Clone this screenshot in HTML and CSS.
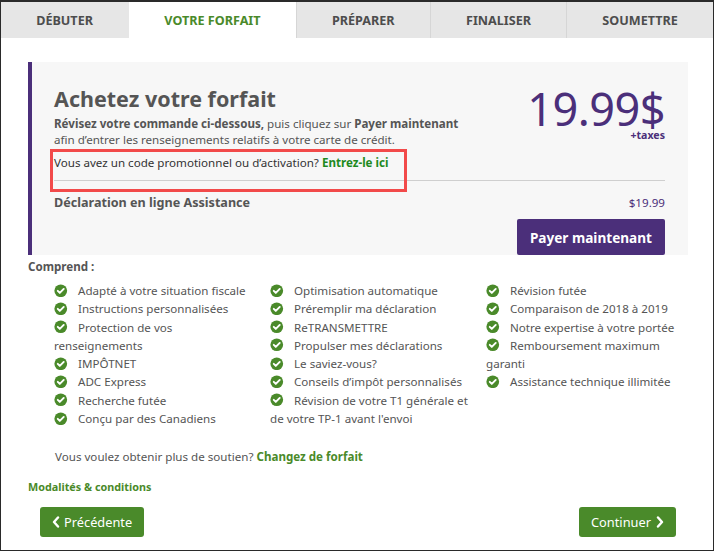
FILE: index.html
```html
<!DOCTYPE html>
<html lang="fr">
<head>
<meta charset="utf-8">
<title>Votre forfait</title>
<link rel="stylesheet" href="styles.css">
</head>
<body>
<div class="frame">
  <nav class="tabs">
    <div class="tab">DÉBUTER</div>
    <div class="tab active">VOTRE FORFAIT</div>
    <div class="tab">PRÉPARER</div>
    <div class="tab">FINALISER</div>
    <div class="tab">SOUMETTRE</div>
  </nav>

  <section class="card">
    <div class="card-top">
      <div class="intro">
        <h1 class="title">Achetez votre forfait</h1>
        <p class="lead"><b>Révisez votre commande ci-dessous,</b> puis cliquez sur <b>Payer maintenant</b> afin d’entrer les renseignements relatifs à votre carte de crédit.</p>
      </div>
      <div class="price">
        <div class="amount">19.99$</div>
        <div class="taxes">+taxes</div>
      </div>
    </div>
    <p class="promo">Vous avez un code promotionnel ou d’activation? <a class="promo-link">Entrez-le ici</a></p>
    <div class="divider"></div>
    <div class="item">
      <span class="item-name">Déclaration en ligne Assistance</span>
      <span class="item-price">$19.99</span>
    </div>
    <div class="pay-row"><button class="pay">Payer maintenant</button></div>
    <div class="highlight"></div>
  </section>

  <h2 class="includes">Comprend :</h2>
  <div class="features">
    <ul class="col">
      <li><svg class="ck" viewBox="0 0 14 14"><circle cx="7" cy="7" r="6.6"/><path d="M3.9 7.1l2.1 2.1 4.1-4.1"/></svg>Adapté à votre situation fiscale</li>
      <li><svg class="ck" viewBox="0 0 14 14"><circle cx="7" cy="7" r="6.6"/><path d="M3.9 7.1l2.1 2.1 4.1-4.1"/></svg>Instructions personnalisées</li>
      <li><svg class="ck" viewBox="0 0 14 14"><circle cx="7" cy="7" r="6.6"/><path d="M3.9 7.1l2.1 2.1 4.1-4.1"/></svg>Protection de vos renseignements</li>
      <li><svg class="ck" viewBox="0 0 14 14"><circle cx="7" cy="7" r="6.6"/><path d="M3.9 7.1l2.1 2.1 4.1-4.1"/></svg>IMPÔTNET</li>
      <li><svg class="ck" viewBox="0 0 14 14"><circle cx="7" cy="7" r="6.6"/><path d="M3.9 7.1l2.1 2.1 4.1-4.1"/></svg>ADC Express</li>
      <li><svg class="ck" viewBox="0 0 14 14"><circle cx="7" cy="7" r="6.6"/><path d="M3.9 7.1l2.1 2.1 4.1-4.1"/></svg>Recherche futée</li>
      <li><svg class="ck" viewBox="0 0 14 14"><circle cx="7" cy="7" r="6.6"/><path d="M3.9 7.1l2.1 2.1 4.1-4.1"/></svg>Conçu par des Canadiens</li>
    </ul>
    <ul class="col">
      <li><svg class="ck" viewBox="0 0 14 14"><circle cx="7" cy="7" r="6.6"/><path d="M3.9 7.1l2.1 2.1 4.1-4.1"/></svg>Optimisation automatique</li>
      <li><svg class="ck" viewBox="0 0 14 14"><circle cx="7" cy="7" r="6.6"/><path d="M3.9 7.1l2.1 2.1 4.1-4.1"/></svg>Préremplir ma déclaration</li>
      <li><svg class="ck" viewBox="0 0 14 14"><circle cx="7" cy="7" r="6.6"/><path d="M3.9 7.1l2.1 2.1 4.1-4.1"/></svg>ReTRANSMETTRE</li>
      <li><svg class="ck" viewBox="0 0 14 14"><circle cx="7" cy="7" r="6.6"/><path d="M3.9 7.1l2.1 2.1 4.1-4.1"/></svg>Propulser mes déclarations</li>
      <li><svg class="ck" viewBox="0 0 14 14"><circle cx="7" cy="7" r="6.6"/><path d="M3.9 7.1l2.1 2.1 4.1-4.1"/></svg>Le saviez-vous?</li>
      <li><svg class="ck" viewBox="0 0 14 14"><circle cx="7" cy="7" r="6.6"/><path d="M3.9 7.1l2.1 2.1 4.1-4.1"/></svg>Conseils d’impôt personnalisés</li>
      <li><svg class="ck" viewBox="0 0 14 14"><circle cx="7" cy="7" r="6.6"/><path d="M3.9 7.1l2.1 2.1 4.1-4.1"/></svg>Révision de votre T1 générale et de votre TP-1 avant l'envoi</li>
    </ul>
    <ul class="col">
      <li><svg class="ck" viewBox="0 0 14 14"><circle cx="7" cy="7" r="6.6"/><path d="M3.9 7.1l2.1 2.1 4.1-4.1"/></svg>Révision futée</li>
      <li><svg class="ck" viewBox="0 0 14 14"><circle cx="7" cy="7" r="6.6"/><path d="M3.9 7.1l2.1 2.1 4.1-4.1"/></svg>Comparaison de 2018 à 2019</li>
      <li><svg class="ck" viewBox="0 0 14 14"><circle cx="7" cy="7" r="6.6"/><path d="M3.9 7.1l2.1 2.1 4.1-4.1"/></svg>Notre expertise à votre portée</li>
      <li><svg class="ck" viewBox="0 0 14 14"><circle cx="7" cy="7" r="6.6"/><path d="M3.9 7.1l2.1 2.1 4.1-4.1"/></svg>Remboursement maximum garanti</li>
      <li><svg class="ck" viewBox="0 0 14 14"><circle cx="7" cy="7" r="6.6"/><path d="M3.9 7.1l2.1 2.1 4.1-4.1"/></svg>Assistance technique illimitée</li>
    </ul>
  </div>

  <p class="upgrade">Vous voulez obtenir plus de soutien? <a class="green-link">Changez de forfait</a></p>
  <p class="terms"><a class="green-link">Modalités &amp; conditions</a></p>

  <div class="nav-buttons">
    <button class="btn-green"><svg class="chev" viewBox="0 0 8 12"><path d="M6 1.5L2 6l4 4.5"/></svg>Précédente</button>
    <button class="btn-green">Continuer<svg class="chev after" viewBox="0 0 8 12"><path d="M2 1.5L6 6l-4 4.5"/></svg></button>
  </div>
</div>
</body>
</html>
```

FILE: styles.css
```css
* { box-sizing: border-box; }
html, body { margin: 0; padding: 0; background: #fff; }
body {
  font-family: "Noto Sans", "Open Sans", sans-serif;
  color: #555;
  font-size: 11.6px;
}
.frame {
  width: 714px;
  height: 551px;
  border: 1px solid #2a2a2a;
  border-top-width: 2px;
  position: relative;
  overflow: hidden;
}
.tabs {
  display: flex;
  height: 36px;
  background: #e6e6e6;
}
.tab {
  flex: 1 1 auto;
  padding: 0 35px;
  display: flex;
  align-items: center;
  justify-content: center;
  font-weight: 700;
  font-size: 12.6px;
  color: #4d4d4d;
  border-left: 1px solid #d6d6d6;
  white-space: nowrap;
}
.tab:first-child { border-left: 0; }
.tab.active {
  background: #fff;
  color: #4a8a2a;
  border-left-color: #e6e6e6;
}

.card {
  position: relative;
  margin: 24px 0 0 27px;
  width: 660px;
  background: #f7f7f7;
  border-left: 4px solid #4b2f7a;
  padding: 24px 23px 0 22px;
}
.card-top {
  display: flex;
  justify-content: space-between;
}
.intro { width: 420px; }
.title {
  margin: 0 0 4px 0;
  font-size: 21.5px;
  line-height: 26px;
  font-weight: 700;
  color: #555;
}
.lead {
  margin: 0;
  font-size: 11.6px;
  line-height: 16px;
  color: #555;
}
.lead b { font-weight: 700; }
.price { text-align: right; margin-top: 2px; }
.amount {
  font-size: 45px;
  line-height: 42px;
  color: #4b2f7a;
  letter-spacing: -0.5px;
}
.taxes {
  font-size: 10.6px;
  font-weight: 700;
  color: #4b2f7a;
  line-height: 10px;
  margin-top: 0;
}
.promo {
  margin: 7px 0 0 0;
  font-size: 11.6px;
  line-height: 16px;
  color: #333;
}
.promo-link { color: #1e8a1e; font-weight: 700; }
.divider {
  margin-top: 9px;
  height: 1px;
  background: #cfcfcf;
}
.item {
  display: flex;
  justify-content: space-between;
  align-items: baseline;
  margin-top: 13px;
  line-height: 18px;
}
.item-name { font-size: 12.6px; font-weight: 700; color: #555; }
.item-price { font-size: 11.6px; color: #4b2f7a; }
.pay-row {
  display: flex;
  justify-content: flex-end;
  margin-top: 7px;
  margin-bottom: -18px;
}
.pay {
  height: 36px;
  padding: 0 13px;
  background: #4b2f7a;
  color: #fff;
  border: 0;
  border-radius: 2px;
  font-family: inherit;
  font-size: 13.6px;
  font-weight: 700;
}
.highlight {
  position: absolute;
  left: 18px;
  top: 87px;
  width: 357px;
  height: 43px;
  border: 3px solid #f24a4a;
  pointer-events: none;
}

.includes {
  margin: 21px 0 0 27px;
  font-size: 11.6px;
  line-height: 18px;
  font-weight: 700;
  color: #555;
}
.features {
  display: grid;
  grid-template-columns: 216px 216px 216px;
  margin: 6px 0 0 53px;
}
.col {
  list-style: none;
  margin: 0;
  padding: 0 14px 0 0;
}
.col li {
  line-height: 18.3px;
  font-size: 11.6px;
  color: #555;
}
.ck {
  width: 13.5px;
  height: 13.5px;
  vertical-align: -2px;
  margin-right: 10.5px;
}
.ck circle { fill: #4a8a2a; }
.ck path {
  fill: none;
  stroke: #fff;
  stroke-width: 2;
  stroke-linecap: round;
  stroke-linejoin: round;
}
.upgrade {
  margin: 20px 0 0 54px;
  font-size: 11.6px;
  line-height: 18px;
  color: #555;
}
.green-link { color: #4a8a2a; font-weight: 700; }
.terms {
  margin: 12px 0 0 27px;
  font-size: 10.8px;
  line-height: 18px;
}
.nav-buttons {
  display: flex;
  justify-content: space-between;
  margin: 11px 37px 0 39px;
}
.btn-green {
  display: inline-flex;
  align-items: center;
  height: 30px;
  padding: 0 12px;
  background: #4a8a2a;
  color: #fff;
  border: 0;
  border-radius: 3px;
  font-family: inherit;
  font-size: 12.8px;
}
.chev {
  width: 8px;
  height: 12px;
  margin-right: 4px;
}
.chev.after { margin: 0 0 0 5px; }
.chev path {
  fill: none;
  stroke: #fff;
  stroke-width: 2.4;
  stroke-linecap: round;
  stroke-linejoin: round;
}
```
